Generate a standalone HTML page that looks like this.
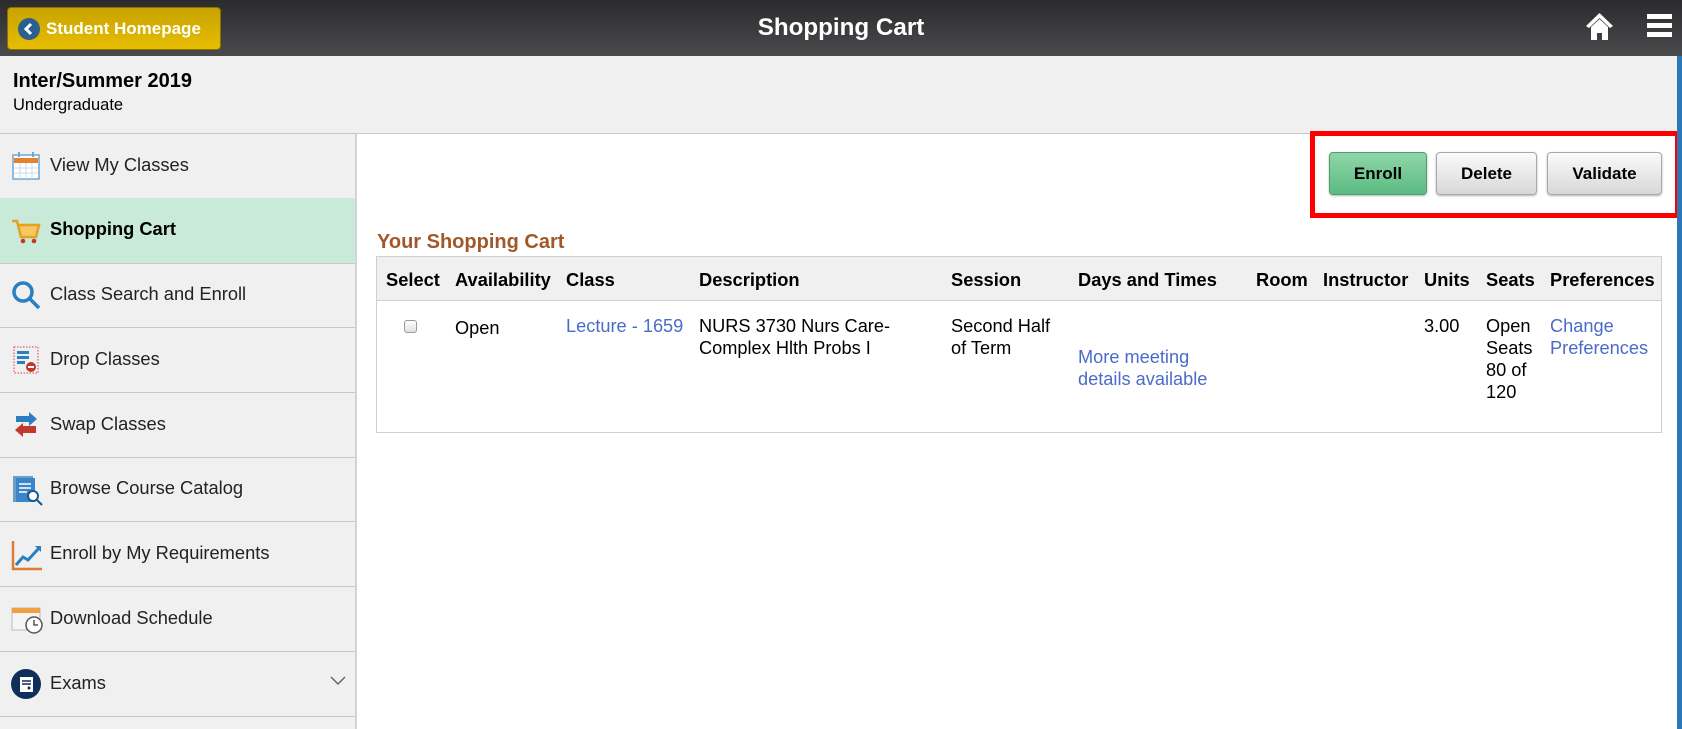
<!DOCTYPE html>
<html><head><meta charset="utf-8">
<style>
*{margin:0;padding:0;box-sizing:border-box}
body{width:1682px;height:729px;overflow:hidden;background:#fff;font-family:"Liberation Sans",Arial,sans-serif;color:#000;position:relative}
.hdr{position:absolute;left:0;top:0;width:1682px;height:56px;background:linear-gradient(#2b2b2d,#4a4a4d);}
.back{position:absolute;left:7px;top:7px;width:214px;height:43px;border-radius:4px;background:linear-gradient(#c9a200,#e6bd00);border:1px solid #8a7200;}
.back .c{position:absolute;left:10px;top:10px;width:22px;height:22px;border-radius:50%;background:#2a5f8f;}
.back span{position:absolute;left:38px;top:11px;color:#fff;font-weight:bold;font-size:17px}
.title{position:absolute;left:0;width:1682px;top:14px;text-align:center;color:#fff;font-weight:bold;font-size:24.2px}
.term{position:absolute;left:0;top:56px;width:1682px;height:78px;background:#f0f0f0;border-bottom:1px solid #c8c8c8}
.term b{position:absolute;left:13px;top:14px;font-size:20px}
.term i{position:absolute;left:13px;top:40px;font-size:16.5px;font-style:normal}
.side{position:absolute;left:0;top:134px;width:357px;height:595px;background:#f0f0f0;border-right:2px solid #d4d4d4}
.item{position:absolute;left:0;width:355px;height:65px;border-bottom:1px solid #c8c8c8;font-size:18.3px}
.item span{position:absolute;left:50px;top:20px;color:#222}
.item svg{position:absolute;left:11px;top:17px}
.sel{background:#c9ead8}
.sel span{font-weight:bold;color:#000}
.red{position:absolute;left:1310px;top:131px;width:370px;height:87px;border:5px solid #f00}
.btn{position:absolute;top:152px;height:43px;border-radius:4px;border:1px solid #a8a8a8;background:linear-gradient(#fafafa,#d8d8d8);font-weight:bold;font-size:17px;text-align:center;line-height:41px;box-shadow:0 1px 2px rgba(0,0,0,.3)}
.en{background:linear-gradient(#8fd6a8,#5cbb82);border-color:#4d9e6c}
.yc{position:absolute;left:377px;top:231px;color:#a0582a;font-weight:bold;font-size:20px}
.tbl{position:absolute;left:376px;top:256px;width:1286px;height:177px;border:1px solid #cfcfcf}
.th{position:absolute;left:0;top:0;width:1284px;height:44px;background:#f0f0f0;border-bottom:1px solid #cfcfcf}
.h{position:absolute;top:12px;font-weight:bold;font-size:18.3px}
.d{position:absolute;top:58px;font-size:18.2px;line-height:22px}
.a{color:#4a6cc8}
.cb{position:absolute;left:27px;top:63px;width:13px;height:13px;border:1px solid #999;border-radius:3px;background:linear-gradient(#fff,#e0e0e0)}
.sb{position:absolute;left:1677px;top:56px;width:5px;height:673px;background:#2a78b8}
</style></head><body>
<div class="hdr">
 <div class="back"><div class="c"><svg width="22" height="22"><path d="M13 6 L8 11 L13 16" stroke="#fff" stroke-width="3" fill="none"/></svg></div><span>Student Homepage</span></div>
 <div class="title">Shopping Cart</div>
 <svg style="position:absolute;left:1585px;top:12px" width="29" height="29" viewBox="0 0 29 29"><path d="M14.5 1 L28 14 L25 16 L14.5 6 L4 16 L1 14 Z" fill="#fff"/><path d="M6 15 L14.5 7 L23 15 V28 H17 V21 H12 V28 H6 Z" fill="#fff"/></svg>
 <svg style="position:absolute;left:1647px;top:14px" width="25" height="23"><rect y="0" width="25" height="5" fill="#fff"/><rect y="9" width="25" height="5" fill="#fff"/><rect y="18" width="25" height="5" fill="#fff"/></svg>
</div>
<div class="term"><b>Inter/Summer 2019</b><i>Undergraduate</i></div>
<div class="side">
 <div class="item" style="top:0"><svg width="30" height="30"><rect x="2" y="4" width="26" height="24" fill="#fff" stroke="#6aa8d8" stroke-width="1.5"/><rect x="3" y="7" width="24" height="5" fill="#e8822a"/><path d="M3 17H27M3 22H27M9 12V28M15 12V28M21 12V28" stroke="#c8dcec"/><rect x="7" y="1" width="2" height="5" fill="#6aa8d8"/><rect x="21" y="1" width="2" height="5" fill="#6aa8d8"/></svg><span>View My Classes</span></div>
 <div class="item sel" style="top:64px;height:66px"><svg width="30" height="30"><path d="M1 6 H6 L10 22 H25 L28 10 H7" stroke="#e8a020" stroke-width="2.5" fill="#f5c860"/><circle cx="12" cy="26" r="2.3" fill="#c0392b"/><circle cx="23" cy="26" r="2.3" fill="#c0392b"/></svg><span>Shopping Cart</span></div>
 <div class="item" style="top:129px"><svg width="30" height="30"><circle cx="12" cy="12" r="9" stroke="#2a7fc0" stroke-width="3.5" fill="none"/><path d="M18 18 L28 28" stroke="#2a7fc0" stroke-width="3.5"/></svg><span>Class Search and Enroll</span></div>
 <div class="item" style="top:194px"><svg width="30" height="30"><rect x="3" y="2" width="24" height="26" fill="none" stroke="#d04040" stroke-dasharray="1.5 1.5"/><rect x="6" y="6" width="12" height="3" fill="#2a7fc0"/><rect x="6" y="11" width="12" height="3" fill="#2a7fc0"/><rect x="6" y="16" width="8" height="3" fill="#2a7fc0"/><circle cx="20" cy="22" r="5" fill="#c0392b"/><rect x="17" y="21" width="6" height="2" fill="#fff"/></svg><span>Drop Classes</span></div>
 <div class="item" style="top:259px"><svg width="30" height="30"><path d="M5 6 H18 V2 L26 9 L18 16 V12 H5 Z" fill="#2a7fc0"/><path d="M25 16 H12 V13 L4 20 L12 27 V23 H25 Z" fill="#c0392b"/></svg><span>Swap Classes</span></div>
 <div class="item" style="top:323px"><svg width="32" height="32"><rect x="2" y="2" width="20" height="26" fill="#6aa0c8"/><rect x="5" y="4" width="19" height="24" fill="#3a86c8"/><path d="M8 10H20M8 14H20M8 18H16" stroke="#fff" stroke-width="1.5"/><circle cx="22" cy="22" r="5" fill="#fff" stroke="#1a5a90" stroke-width="2"/><path d="M26 26 L31 31" stroke="#1a5a90" stroke-width="2"/></svg><span>Browse Course Catalog</span></div>
 <div class="item" style="top:388px"><svg width="32" height="32"><path d="M2 2 V30 H31" stroke="#e07a30" stroke-width="2.5" fill="none"/><path d="M5 26 L12 18 L17 21 L29 8" stroke="#2a7fc0" stroke-width="3" fill="none"/><path d="M24 7 L30 7 L30 13 Z" fill="#2a7fc0"/></svg><span>Enroll by My Requirements</span></div>
 <div class="item" style="top:453px"><svg width="34" height="30"><rect x="1" y="4" width="28" height="22" fill="#f5f5f5" stroke="#bbb"/><rect x="1" y="4" width="28" height="5" fill="#f0a040"/><circle cx="23" cy="21" r="8" fill="#fff" stroke="#555" stroke-width="1.5"/><path d="M23 16 V21 H27" stroke="#555" stroke-width="1.5" fill="none"/></svg><span>Download Schedule</span></div>
 <div class="item" style="top:518px"><svg width="32" height="32"><circle cx="15" cy="15" r="15" fill="#0f2f5a"/><rect x="9" y="8" width="13" height="15" fill="#fff"/><path d="M11 12H20M11 15H20" stroke="#0f2f5a" stroke-width="1.5"/><circle cx="18" cy="19" r="1.5" fill="#0f2f5a"/></svg><span>Exams</span><svg style="left:330px;top:24px" width="16" height="10"><path d="M1 1 L8 8 L15 1" stroke="#666" stroke-width="1.5" fill="none"/></svg></div>
</div>
<div class="red"></div>
<div class="btn en" style="left:1329px;width:98px">Enroll</div>
<div class="btn" style="left:1436px;width:101px">Delete</div>
<div class="btn" style="left:1547px;width:115px">Validate</div>
<div class="yc">Your Shopping Cart</div>
<div class="tbl">
 <div class="th">
  <div class="h" style="left:9px">Select</div>
  <div class="h" style="left:78px">Availability</div>
  <div class="h" style="left:189px">Class</div>
  <div class="h" style="left:322px">Description</div>
  <div class="h" style="left:574px">Session</div>
  <div class="h" style="left:701px">Days and Times</div>
  <div class="h" style="left:879px">Room</div>
  <div class="h" style="left:946px">Instructor</div>
  <div class="h" style="left:1047px">Units</div>
  <div class="h" style="left:1109px">Seats</div>
  <div class="h" style="left:1173px">Preferences</div>
 </div>
 <div class="cb"></div>
 <div class="d" style="left:78px;top:60px">Open</div>
 <div class="d a" style="left:189px">Lecture - 1659</div>
 <div class="d" style="left:322px">NURS 3730 Nurs Care-<br>Complex Hlth Probs I</div>
 <div class="d" style="left:574px">Second Half<br>of Term</div>
 <div class="d a" style="left:701px;top:89px">More meeting<br>details available</div>
 <div class="d" style="left:1047px">3.00</div>
 <div class="d" style="left:1109px">Open<br>Seats<br>80 of<br>120</div>
 <div class="d a" style="left:1173px">Change<br>Preferences</div>
</div>
<div class="sb"></div>
</body></html>
